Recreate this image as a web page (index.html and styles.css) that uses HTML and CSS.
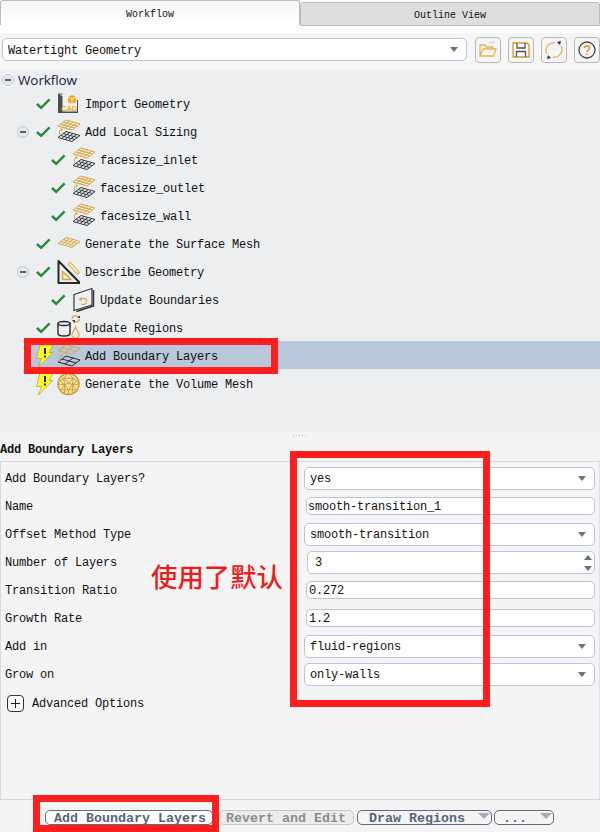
FILE: index.html
```html
<!DOCTYPE html>
<html lang="en">
<head>
  <meta charset="UTF-8" />
  <title>Workflow</title>
  <link rel="stylesheet" href="styles.css">
</head>
<body>
  <svg class="defs" width="0" height="0">
    <defs>
      <g id="grid4">
        <path d="M1 6 9 0 23 4 15 10Z M3.7 4 17.7 8 M6.3 2 20.3 6 M4.5 7 12.5 1 M8 8 16 2 M11.5 9 19.5 3" fill="none" stroke="currentColor" stroke-width="1" />
      </g>
      <g id="grid2">
        <path d="M1 6 9 0 23 4 15 10Z M5 3 19 7 M8 8 16 2" fill="none" stroke="currentColor" stroke-width="1" />
      </g>
      <symbol id="i-sizing" viewBox="0 0 23 28">
        <use href="#grid4" y="2" color="#dba63e" />
        <use href="#grid4" y="13.5" color="#33373d" />
        <path d="M2.5 17V13.5C2.5 12.5 3.5 11.5 5 11.5M3.5 10.5 5.5 11.5 3.8 13" fill="none" stroke="#dba63e" />
      </symbol>
      <symbol id="i-cad" viewBox="0 0 23 28">
        <path d="M1 3.5H5.5V21.5H20.5V23H1Z" fill="#4a4d52" />
        <path d="M2 4.5H6V21H20V12.5" fill="#f6f1e3" stroke="none" />
        <path d="M6 3.5 20 10V20H6Z" fill="#f6f1e3" />
        <path d="M20.5 10V23" stroke="#4a4d52" />
        <path d="M11 7 15 5 19 7V12L15 14 11 12Z" fill="#e0a92e" />
        <path d="M11 7 15 9 19 7M15 9V14" fill="none" stroke="#fff3cf" stroke-width=".9" />
        <text x="4" y="21" class="cad-label">CAD</text>
      </symbol>
      <symbol id="i-surface" viewBox="0 0 23 28">
        <use href="#grid4" y="7.5" color="#dba63e" />
      </symbol>
      <symbol id="i-ruler" viewBox="0 0 23 28">
        <path d="M1.5 3V25H23L1.5 3Z" fill="none" stroke="#26292e" stroke-width="2" stroke-linejoin="round" />
        <path d="M5.5 13.5V21.5H14Z" fill="none" stroke="#dba63e" stroke-width="1.5" />
        <path d="M11 6 13 4 21.5 13 22 16 19 15Z" fill="#f5e6bc" stroke="#dba63e" />
      </symbol>
      <symbol id="i-boundary" viewBox="0 0 23 28">
        <path d="M2 8.5 20 2.5V19L2 24.5Z" fill="#eef0f2" stroke="#33373d" stroke-width="1.2" />
        <path d="M4.5 25.5 21.5 20V4" fill="none" stroke="#33373d" stroke-width="1.5" />
        <path d="M9.5 11.5 7.5 13.5 10 14.5M8 13.5C11 11.5 15 12.5 14.5 15.5 14 18.5 11 19 9 18" fill="none" stroke="#dba63e" stroke-width="1.2" />
      </symbol>
      <symbol id="i-regions" viewBox="0 0 23 28">
        <ellipse cx="7" cy="9.5" rx="6" ry="2" fill="none" stroke="#26292e" stroke-width="1.4" />
        <path d="M1 9.5V19.5C1 21 4 22 7 22S13 21 13 19.5V9.5" fill="none" stroke="#26292e" stroke-width="1.4" />
        <path d="M15 5C15 1.5 20 .5 21.5 3.5M22.500 5C22.500 8 18.500 9 16.500 7" fill="none" stroke="#dba63e" stroke-width="1.200" />
        <path d="M20 4H23V1.500ZM15 6H18V9Z" fill="#33373d" />
        <path d="M18.500 13C17.500 16 15 18.500 15 21 15 25 22 25 22 21 22 18.500 19.500 16 18.500 13Z" fill="none" stroke="#dba63e" stroke-width="1.200" />
      </symbol>
      <symbol id="i-layers" viewBox="0 0 23 28">
        <use href="#grid2" y="2.500" color="#d9a441" />
        <use href="#grid2" y="14" color="#26292e" />
        <path d="M2.500 19V15.500C2.500 14.500 3.500 13.500 5 13.500M3.500 12.500 5.500 13.500 3.800 15" fill="none" stroke="#dba63e" />
      </symbol>
      <symbol id="i-sphere" viewBox="0 0 24 28">
        <circle cx="12" cy="14" r="11" fill="#f3e3b5" stroke="#d39b2c" stroke-width="1.500" />
        <path d="M12 3 7 8 3 11 8 15 4 20M12 3 17 8 21 11 16 15 20 20M7 8H17L12 13ZM3 11 7 8 8 15 12 13 16 15 17 8M8 15 12 20 16 15M8 15 8 24M16 15 16 24M4 20 12 20 20 20M12 20 12 25M1 14 8 15M23 14 16 15" fill="none" stroke="#d39b2c" stroke-width="1" />
      </symbol>
      <symbol id="i-check" viewBox="0 0 16 12">
        <path d="M1 6 5.500 10 14.500 1" fill="none" stroke="#2b8a3a" stroke-width="2.600" />
      </symbol>
      <symbol id="i-bolt" viewBox="0 0 17 24">
        <path d="M4 1H17L13 8.500H16.800L2.500 23 5.500 14.500H.5Z" fill="#ffff14" stroke="#9a9a70" stroke-width=".7" />
        <path d="M8 4H10V10H8ZM8 11.500H10V13.500H8Z" fill="#222" />
      </symbol>
    </defs>
  </svg>

  <div class="page">
    <div class="tabs">
      <div class="tab tab-active">Workflow</div>
      <div class="tab">Outline View</div>
    </div>

    <div class="toolbar">
      <div class="combo combo-main">Watertight Geometry<span class="arrow"></span></div>
      <button class="tool-btn">
        <svg width="20" height="20" viewBox="0 0 20 20" fill="none" stroke="#e0b25c" stroke-width="1.300">
          <path d="M2 16V5H7L8.500 7H15V9M2 16H15.500L18 9H5Z" fill="#fdf6e6" />
          <path d="M11 4C12 2 14 1.500 16 3M16 1V3.200H14" stroke="#d8d8d8" />
        </svg>
      </button>
      <button class="tool-btn">
        <svg width="20" height="20" viewBox="0 0 20 20" fill="none" stroke="#cf9a2e" stroke-width="1.300">
          <path d="M2 3H16L18 5V17H2Z" fill="#fff" />
          <path d="M6 3V8H14V3" stroke="#555" />
          <path d="M5.500 17V11.500H14.500V17" stroke="#555" />
        </svg>
      </button>
      <button class="tool-btn">
        <svg width="20" height="20" viewBox="0 0 20 20" fill="none" stroke="#e0b25c" stroke-width="1.300">
          <path d="M3 14C0 9 4 2 11 3" />
          <path d="M17 6C20 11 16 18 9 17" />
          <path d="M13 2 17 1 16 5Z M7 18 3 19 4 15Z" fill="#333" stroke="none" />
        </svg>
      </button>
      <button class="tool-btn">
        <svg width="20" height="20" viewBox="0 0 20 20" fill="none">
          <circle cx="10" cy="10" r="8" stroke="#444" stroke-width="1.300" />
          <path d="M7.500 8C7.500 5 12.500 5 12.500 8 12.500 10 10 10 10 12" stroke="#d99a1e" stroke-width="1.500" />
          <path d="M9.200 13.500H10.800V15H9.200Z" fill="#d99a1e" />
        </svg>
      </button>
    </div>

    <div class="tree">
      <div class="tree-head"><span class="toggle"></span><span class="tree-title">Workflow</span></div>

      <div class="row"><span class="slot"></span><div class="row-body">
        <svg class="status"><use href="#i-check" /></svg>
        <svg class="icon"><use href="#i-cad" /></svg><span class="row-text">Import Geometry</span>
      </div></div>
      <div class="row"><span class="slot"><span class="toggle"></span></span><div class="row-body">
        <svg class="status"><use href="#i-check" /></svg>
        <svg class="icon"><use href="#i-sizing" /></svg><span class="row-text">Add Local Sizing</span>
      </div></div>
      <div class="row row-child"><span class="slot"></span><div class="row-body">
        <svg class="status"><use href="#i-check" /></svg>
        <svg class="icon"><use href="#i-sizing" /></svg><span class="row-text">facesize_inlet</span>
      </div></div>
      <div class="row row-child"><span class="slot"></span><div class="row-body">
        <svg class="status"><use href="#i-check" /></svg>
        <svg class="icon"><use href="#i-sizing" /></svg><span class="row-text">facesize_outlet</span>
      </div></div>
      <div class="row row-child"><span class="slot"></span><div class="row-body">
        <svg class="status"><use href="#i-check" /></svg>
        <svg class="icon"><use href="#i-sizing" /></svg><span class="row-text">facesize_wall</span>
      </div></div>
      <div class="row"><span class="slot"></span><div class="row-body">
        <svg class="status"><use href="#i-check" /></svg>
        <svg class="icon"><use href="#i-surface" /></svg><span class="row-text">Generate the Surface Mesh</span>
      </div></div>
      <div class="row"><span class="slot"><span class="toggle"></span></span><div class="row-body">
        <svg class="status"><use href="#i-check" /></svg>
        <svg class="icon"><use href="#i-ruler" /></svg><span class="row-text">Describe Geometry</span>
      </div></div>
      <div class="row row-child"><span class="slot"></span><div class="row-body">
        <svg class="status"><use href="#i-check" /></svg>
        <svg class="icon"><use href="#i-boundary" /></svg><span class="row-text">Update Boundaries</span>
      </div></div>
      <div class="row"><span class="slot"></span><div class="row-body">
        <svg class="status"><use href="#i-check" /></svg>
        <svg class="icon"><use href="#i-regions" /></svg><span class="row-text">Update Regions</span>
      </div></div>
      <div class="row row-selected"><span class="slot"></span><div class="row-body">
        <svg class="status status-bolt"><use href="#i-bolt" /></svg>
        <svg class="icon"><use href="#i-layers" /></svg><span class="row-text">Add Boundary Layers</span>
      </div></div>
      <div class="row"><span class="slot"></span><div class="row-body">
        <svg class="status status-bolt"><use href="#i-bolt" /></svg>
        <svg class="icon"><use href="#i-sphere" /></svg><span class="row-text">Generate the Volume Mesh</span>
      </div></div>
    </div>

    <div class="task">
      <div class="grip"></div>
      <div class="task-title">Add Boundary Layers</div>
      <div class="panel">
        <div class="field"><label>Add Boundary Layers?</label><div class="combo">yes<span class="arrow"></span></div></div>
        <div class="field"><label>Name</label><div class="text-input text-input-name">smooth-transition_1</div></div>
        <div class="field"><label>Offset Method Type</label><div class="combo">smooth-transition<span class="arrow"></span></div></div>
        <div class="field"><label>Number of Layers</label>
          <div class="spin">3<span class="spin-arrows"><i class="up"></i><i class="down"></i></span></div>
        </div>
        <div class="field"><label>Transition Ratio</label><div class="text-input">0.272</div></div>
        <div class="field"><label>Growth Rate</label><div class="text-input">1.2</div></div>
        <div class="field"><label>Add in</label><div class="combo">fluid-regions<span class="arrow"></span></div></div>
        <div class="field"><label>Grow on</label><div class="combo">only-walls<span class="arrow"></span></div></div>
        <div class="advanced"><span class="plus"></span><span class="row-text">Advanced Options</span></div>
      </div>
      <div class="actions">
        <button class="action action-primary">Add Boundary Layers</button>
        <button class="action action-disabled">Revert and Edit</button>
        <button class="action action-menu">Draw Regions<span class="arrow arrow-light"></span></button>
        <button class="action action-more">...<span class="arrow arrow-light"></span></button>
      </div>
    </div>

    <!-- annotations drawn over the screenshot -->
    <div class="mark mark-row"></div>
    <div class="mark mark-fields"></div>
    <div class="mark mark-button"></div>
    <div class="note">使用了默认</div>
  </div>
</body>
</html>
```

FILE: styles.css
```css
* {
  box-sizing: border-box;
}

body {
  margin: 0;
  background: #fff;
  color: #111;
  font-family: "Liberation Mono", monospace;
  font-size: 12px;
  letter-spacing: -0.2px;
}

.defs {
  position: absolute;
}

.cad-label {
  font-family: "Liberation Sans", sans-serif;
  font-size: 7.5px;
  font-weight: bold;
  letter-spacing: 0;
  fill: #e0a92e;
}

.page {
  position: relative;
  width: 600px;
  height: 832px;
  overflow: hidden;
  display: flex;
  flex-direction: column;
}

/* tabs */
.tabs {
  display: flex;
  height: 26px;
}

.tab {
  flex: 1;
  margin-top: 2px;
  padding-top: 2px;
  display: flex;
  align-items: center;
  justify-content: center;
  font-size: 10px;
  letter-spacing: 0;
  background: #dedede;
  border: 1px solid #bcbcbc;
  border-radius: 3px 3px 0 0;
}

.tab-active {
  margin-top: 0;
  background: linear-gradient(#f6f6f6, #fff);
  border-bottom: none;
  height: 25px;
}

/* toolbar */
.toolbar {
  display: flex;
  align-items: center;
  gap: 7px;
  height: 37px;
  margin-top: 7px;
  padding: 0 0 4px 2px;
  background: #f5f5f5;
}

.combo {
  position: relative;
  display: flex;
  align-items: center;
  flex: 1;
  height: 23px;
  padding: 2px 0 0 5px;
  background: #fff;
  border: 1px solid #bac4d6;
  border-radius: 5px;
}

.combo-main {
  flex: 0 0 465px;
  margin-right: 1px;
}

.arrow {
  position: absolute;
  right: 8px;
  top: 8px;
  border-style: solid;
  border-width: 5px 4.5px 0;
  border-color: #6b7280 transparent transparent;
}

.tool-btn {
  flex: 0 0 26px;
  height: 26px;
  padding: 0;
  display: flex;
  align-items: center;
  justify-content: center;
  background: #f5f5f5;
  border: 1px solid #b8b8b8;
  border-radius: 4px;
}

/* workflow tree */
.tree {
  height: 362px;
  background: #eceef0;
}

.tree-head {
  display: flex;
  align-items: center;
  gap: 4px;
  height: 20px;
  padding-left: 2px;
}

.tree-title {
  font-family: "Open Sans", sans-serif;
  font-size: 13.5px;
  letter-spacing: -0.1px;
  color: #14233c;
}

.toggle {
  position: relative;
  display: block;
  width: 12px;
  height: 12px;
  background: #e6e8ee;
  border: 1px solid #c3c8d2;
  border-radius: 50%;
}

.toggle::before {
  content: "";
  position: absolute;
  left: 2px;
  top: 4px;
  width: 6px;
  height: 2px;
  background: #5a6070;
}

.row {
  display: flex;
  align-items: center;
  height: 28px;
  padding-left: 17px;
}

.slot {
  flex: 0 0 14px;
}

.row-body {
  flex: 1;
  display: flex;
  align-items: center;
  height: 28px;
  padding-left: 5px;
}

.row-text {
  padding-top: 2px;
}

.row-child .row-body {
  padding-left: 20px;
}

.row-selected {
  margin: -1px 0 1px;
}

.row-selected .row-body {
  padding-top: 2px;
  background: #b8c8da;
}

.status {
  flex: 0 0 15px;
  width: 15px;
  height: 12px;
  margin-right: 6px;
}

.status-bolt {
  flex-basis: 17px;
  width: 17px;
  height: 24px;
  margin-right: 4px;
}

.icon {
  flex: 0 0 23px;
  width: 23px;
  height: 28px;
  margin-right: 5px;
  overflow: visible;
}

/* task panel */
.task {
  flex: 1;
  display: flex;
  flex-direction: column;
  background: #f4f4f4;
}

.grip {
  height: 3px;
  width: 16px;
  margin: 2px auto 0;
  background: radial-gradient(circle, #b8b8b8 0.7px, transparent 0.8px) 0 0 / 3px 3px;
}

.task-title {
  height: 24px;
  padding-top: 6px;
  font-weight: bold;
}

.panel {
  height: 339px;
  padding: 2px 4px 0 0;
  background: #f4f4f4;
  border: 1px solid #d5d9e6;
  border-right-color: #dfe1e8;
}

.field {
  display: flex;
  align-items: center;
  height: 28px;
}

.field label {
  flex: 0 0 303px;
  padding: 2px 0 0 4px;
}

.text-input {
  flex: 1;
  height: 18px;
  margin-left: 2px;
  padding-left: 2px;
  line-height: 18px;
  background: #fff;
  border: 1px solid #bac4d6;
  border-radius: 5px;
}

.text-input-name {
  padding-left: 1px;
}

.spin {
  position: relative;
  display: flex;
  align-items: center;
  flex: 1;
  height: 23px;
  margin-left: 3px;
  padding: 2px 0 0 7px;
  background: #fff;
  border: 1px solid #bac4d6;
  border-radius: 5px;
}

.spin-arrows i {
  position: absolute;
  right: 2px;
  border-style: solid;
  border-color: transparent;
}

.spin-arrows .up {
  top: 3px;
  border-width: 0 4.5px 5px;
  border-bottom-color: #6b7280;
}

.spin-arrows .down {
  bottom: 2px;
  border-width: 5px 4.5px 0;
  border-top-color: #6b7280;
}

.advanced {
  display: flex;
  align-items: center;
  gap: 8px;
  height: 28px;
  padding-left: 6px;
  margin-top: 1px;
}

.plus {
  position: relative;
  width: 17px;
  height: 17px;
  background: #fff;
  border: 1px solid #333;
  border-radius: 4px;
}

.plus::before,
.plus::after {
  content: "";
  position: absolute;
  background: #222;
}

.plus::before {
  left: 3px;
  top: 7px;
  width: 9px;
  height: 1px;
}

.plus::after {
  left: 7px;
  top: 3px;
  width: 1px;
  height: 9px;
}

/* bottom buttons */
.actions {
  display: flex;
  padding: 10px 0 0 45px;
}

.action {
  position: relative;
  height: 15px;
  padding: 1px 0 0;
  text-align: left;
  font-family: "Liberation Mono", monospace;
  font-size: 13.33px;
  font-weight: bold;
  letter-spacing: 0;
  line-height: 13px;
  color: #56657a;
  background: #f4f4f4;
  border: 1px solid #5e6b80;
  border-radius: 5px;
}

.action-primary {
  width: 168px;
  padding-left: 8px;
  margin-right: 6px;
  background: #fff;
}

.action-disabled {
  width: 135px;
  padding-left: 6px;
  margin-right: 3px;
  color: #8c8c8c;
  background: #ececec;
  border-color: #c6c6c6;
}

.action-menu {
  width: 135px;
  padding-left: 11px;
  margin-right: 2px;
}

.action-more {
  width: 60px;
  padding-left: 8px;
}

.arrow-light {
  top: 2px;
  right: 1px;
  border-width: 6px 6px 0;
  border-top-color: #a8acb4;
}

/* red annotations */
.mark {
  position: absolute;
  border: 7px solid #ff1e1e;
}

.mark-row {
  left: 24px;
  top: 338px;
  width: 254px;
  height: 36px;
}

.mark-fields {
  left: 290px;
  top: 451px;
  width: 200px;
  height: 256px;
}

.mark-button {
  left: 33px;
  top: 795px;
  width: 186px;
  height: 37px;
}

.note {
  position: absolute;
  left: 151px;
  top: 559px;
  font-family: "Noto Sans CJK SC", sans-serif;
  font-size: 26.4px;
  font-weight: 500;
  letter-spacing: 0;
  line-height: 34px;
  color: #f01c1c;
}
```
